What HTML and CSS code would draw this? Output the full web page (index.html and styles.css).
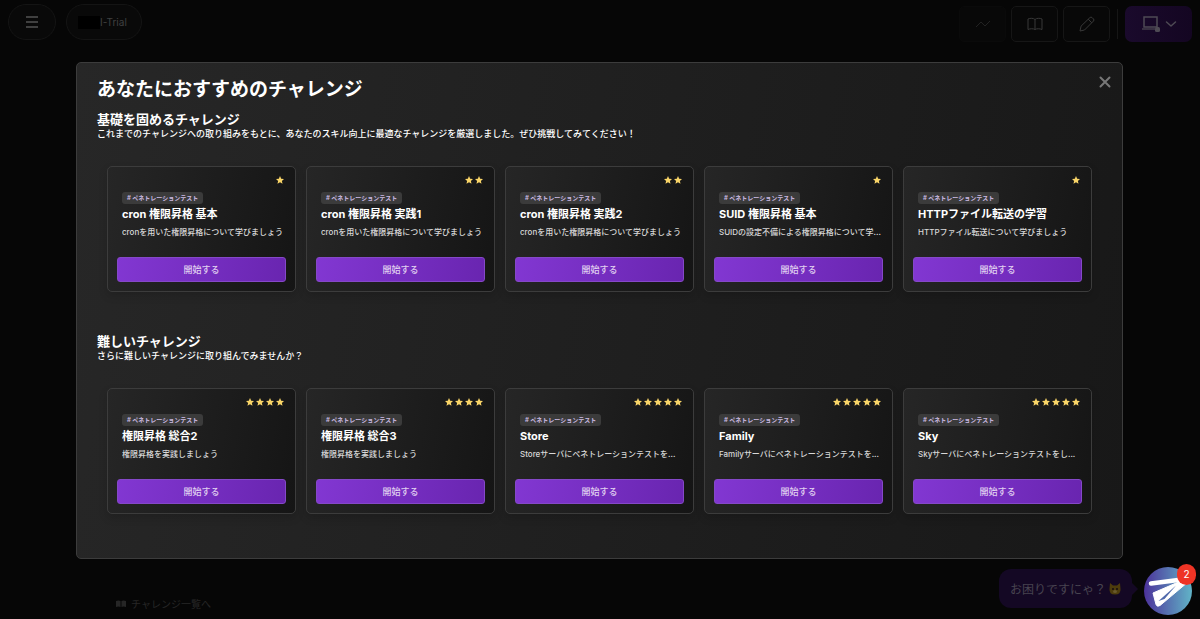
FILE: index.html
```html
<!DOCTYPE html>
<html lang="ja">
<head>
    <meta charset="UTF-8">
    <meta name="viewport" content="width=device-width, initial-scale=1.0">
    <title>おすすめのチャレンジ</title>
    <link rel="stylesheet" href="styles.css">
</head>
<body>
    <header class="header">
        <div class="header-left">
            <button class="pill menu" type="button" aria-label="メニュー">
                <svg width="12" height="12" viewBox="0 0 12 12" fill="currentColor"><path d="M0 0h12v2H0zM0 5h12v2H0zM0 10h12v2H0z"/></svg>
            </button>
            <a class="pill team" href="#"><span class="mask"></span>I-Trial</a>
        </div>
        <nav class="header-right">
            <button class="tool off" type="button" aria-label="進捗" disabled>
                <svg width="16" height="16" viewBox="0 0 16 16" fill="none" stroke="currentColor"><path d="M1 11l5-5 4 4 5-5"/></svg>
            </button>
            <button class="tool" type="button" aria-label="教材">
                <svg width="16" height="16" viewBox="0 0 16 16" fill="none" stroke="currentColor"><path d="M8 3.500C6.500 2 3 2 1 3v10.500c2-1 5.500-1 7 0 1.500-1 5-1 7 0V3c-2-1-5.500-1-7 .5zM8 3.500v10"/></svg>
            </button>
            <button class="tool" type="button" aria-label="メモ">
                <svg width="16" height="16" viewBox="0 0 16 16" fill="none" stroke="currentColor" stroke-linejoin="round" stroke-linecap="round"><path d="M11 1.500q1-1 2 0l1.500 1.500q1 1 0 2L5.500 14 1 15l1-4.500zM9.500 3.500l3 3"/></svg>
            </button>
            <span class="divider"></span>
            <button class="machine" type="button" aria-label="マシン">
                <svg width="20" height="18" viewBox="0 0 20 18"><path d="M3 2h13v10H3z" fill="none" stroke="currentColor" stroke-width="1.500"/><path d="M1 14h13" stroke="currentColor" stroke-width="2" opacity=".6"/><rect x="14" y="12" width="5" height="5" rx="1.500" fill="currentColor"/></svg>
                <svg width="12" height="12" viewBox="0 0 12 12" fill="none" stroke="currentColor" stroke-width="1.500" stroke-linecap="round" stroke-linejoin="round"><path d="M1.500 4l4.500 4 4.500-4"/></svg>
            </button>
        </nav>
    </header>

    <footer class="footer">
        <a href="#">
            <svg width="10" height="8" viewBox="0 0 10 8" fill="currentColor"><path d="M0 1q2.500-1 4.500 0v6q-2-1-4.500 0zM5.500 1q2-1 4.500 0v6q-2.500-1-4.500 0z"/></svg>
            チャレンジ一覧へ
        </a>
    </footer>

    <div class="overlay">
        <main class="modal" role="dialog" aria-labelledby="modal-title">
            <button class="close" type="button" aria-label="閉じる">
                <svg width="12" height="12" viewBox="0 0 12 12" stroke="currentColor" stroke-width="2" stroke-linecap="round"><path d="M1.500 1.500l9 9M10.500 1.500l-9 9"/></svg>
            </button>
            <h1 id="modal-title">あなたにおすすめのチャレンジ</h1>

            <section>
                <h2>基礎を固めるチャレンジ</h2>
                <p class="lead">これまでのチャレンジへの取り組みをもとに、あなたのスキル向上に最適なチャレンジを厳選しました。ぜひ挑戦してみてください！</p>
                <div class="cards" id="basic"></div>
            </section>

            <section>
                <h2>難しいチャレンジ</h2>
                <p class="lead">さらに難しいチャレンジに取り組んでみませんか？</p>
                <div class="cards" id="hard"></div>
            </section>
        </main>
    </div>

    <aside class="help">
        <div class="bubble">
            お困りですにゃ？
            <svg width="12" height="12" viewBox="0 0 12 12"><path d="M1 0l3 2.500h4L11 0l.5 6q.5 5.500-5.500 5.500T.5 6z" fill="#4d3c0c"/><circle cx="4" cy="6" r="1" fill="#150b10"/><circle cx="8" cy="6" r="1" fill="#150b10"/><ellipse cx="6" cy="8.500" rx="2" ry="1.500" fill="#68592c"/></svg>
        </div>
        <button class="chat" type="button" aria-label="サポートチャット">
            <svg width="48" height="48" viewBox="0 0 48 48">
                <path d="M7 16.500L42 12" stroke="#fff" stroke-width="4.500" stroke-linecap="round"/>
                <path d="M9 26L38 13.500 44 15 16 38.500q-3 2-4-1z" fill="#fff" stroke="#fff" stroke-linejoin="round"/>
                <path d="M14.500 34L32 18.500 20.500 32z" fill="#5069ab"/>
            </svg>
            <span class="badge">2</span>
        </button>
    </aside>

    <script src="script.js"></script>
</body>
</html>
```

FILE: styles.css
```css
* {
    box-sizing: border-box;
}

body {
    margin: 0;
    min-height: 100vh;
    display: flex;
    flex-direction: column;
    justify-content: space-between;
    background-color: #060606;
    color: #fff;
    font-family: Inter, "Noto Sans CJK JP", sans-serif;
}

button {
    font-family: inherit;
    padding: 0;
    cursor: pointer;
}

a {
    color: inherit;
    text-decoration: none;
}

svg {
    display: block;
    flex-shrink: 0;
}

h1, h2, h3, p {
    margin: 0;
}

/* Header */
.header {
    display: flex;
    justify-content: space-between;
    padding: 4px 8px;
}

.header-left {
    display: flex;
    align-items: flex-start;
    gap: 10px;
}

.pill {
    display: flex;
    align-items: center;
    justify-content: center;
    height: 36px;
    border: 1px solid #141414;
    border-radius: 18px;
    background-color: #090909;
    color: #404040;
    font-size: 10px;
}

.menu {
    width: 48px;
}

.team {
    padding: 0 14px 0 11px;
}

.mask {
    width: 22px;
    height: 13px;
    background-color: #000;
}

.header-right {
    display: flex;
    align-items: center;
    gap: 5px;
    padding-top: 2px;
}

.tool {
    display: flex;
    align-items: center;
    justify-content: center;
    width: 47px;
    height: 36px;
    border: 1px solid #161616;
    border-radius: 5px;
    background-color: #080808;
    color: #383838;
}

.off {
    border-color: #0a0a0a;
    color: #222;
}

.divider {
    width: 1px;
    height: 30px;
    margin: 0 2px;
    background-color: #161616;
}

.machine {
    display: flex;
    align-items: center;
    justify-content: center;
    gap: 4px;
    width: 67px;
    height: 36px;
    border: 0;
    border-radius: 7px;
    background: linear-gradient(90deg, #1a0a2c, #140622);
    color: #4e4a54;
}

/* Footer */
.footer {
    padding: 8px 116px;
    color: #262626;
    font-size: 10px;
    line-height: 14px;
}

.footer a {
    display: inline-flex;
    align-items: center;
    gap: 5px;
}

/* Modal */
.overlay {
    position: absolute;
    inset: 0;
    padding: 62px 77px 60px 76px;
}

.modal {
    position: relative;
    padding: 13px 20px 44px;
    border: 1px solid #3c3c3c;
    border-radius: 5px;
    background: linear-gradient(100deg, #272727, #181818);
}

.close {
    position: absolute;
    top: 13px;
    right: 11px;
    border: 0;
    background: none;
    color: #777;
}

h1 {
    margin-bottom: 7px;
    font-size: 19px;
    line-height: 28px;
}

h2 {
    font-size: 13px;
    line-height: 16px;
}

section + section {
    margin-top: 41px;
}

.lead {
    font-size: 9px;
    font-weight: 500;
    line-height: 14px;
}

/* Cards */
.cards {
    display: grid;
    grid-template-columns: repeat(5, minmax(0, 1fr));
    gap: 10px;
    padding: 25px 10px 0;
}

.card {
    padding: 8px 9px 9px;
    border: 1px solid #3c3c3c;
    border-radius: 5px;
    background: linear-gradient(100deg, #262626, #151515);
    box-shadow: 0 4px 8px rgba(0, 0, 0, 0.15);
}

.stars {
    display: flex;
    justify-content: flex-end;
    gap: 2px;
    height: 10px;
    padding: 1px 2px 1px 0;
}

.card-text {
    padding: 7px 1px 0 5px;
}

.tag {
    display: block;
    width: fit-content;
    height: 12px;
    padding: 0 5px;
    border-radius: 3px;
    background-color: #3b3b3b;
    color: #cdbbe4;
    font-size: 6px;
    font-weight: 600;
    line-height: 12px;
}

.card h3 {
    margin-top: 3px;
    font-size: 11px;
    line-height: 14px;
}

.card p {
    margin: 5px 0 19px;
    overflow: hidden;
    color: #d8d8d8;
    font-size: 8px;
    font-weight: 500;
    line-height: 12px;
    text-overflow: ellipsis;
    white-space: nowrap;
}

.start {
    display: block;
    width: 100%;
    height: 25px;
    border: 1px solid #8548c8;
    border-radius: 3px;
    background: linear-gradient(100deg, #8237d2, #6925b0);
    color: #e0d0f0;
    font-size: 9px;
    font-weight: 500;
}

/* Help chat */
.help {
    position: fixed;
    right: 8px;
    bottom: 4px;
    display: flex;
    align-items: center;
    gap: 12px;
}

.bubble {
    position: relative;
    display: flex;
    align-items: center;
    gap: 3px;
    height: 39px;
    margin-bottom: 5px;
    padding: 0 11px;
    border-radius: 12px;
    background-color: #140824;
    color: #484450;
    font-size: 12px;
}

.bubble::after {
    content: "";
    position: absolute;
    top: 14px;
    left: 100%;
    border: 6px solid transparent;
    border-right-width: 0;
    border-left-color: #140824;
}

.chat {
    position: relative;
    width: 48px;
    height: 48px;
    border: 0;
    border-radius: 50%;
    background: linear-gradient(90deg, #4c329b, #61b4c7);
}

.badge {
    position: absolute;
    top: -3px;
    right: -4px;
    width: 19px;
    height: 21px;
    border-radius: 10px;
    background-color: #ee3425;
    color: #fff;
    font-size: 10px;
    line-height: 21px;
    text-align: center;
}
```

FILE: script.js
```javascript
const basic = [
    { title: "cron 権限昇格 基本", text: "cronを用いた権限昇格について学びましょう", stars: 1 },
    { title: "cron 権限昇格 実践1", text: "cronを用いた権限昇格について学びましょう", stars: 2 },
    { title: "cron 権限昇格 実践2", text: "cronを用いた権限昇格について学びましょう", stars: 2 },
    { title: "SUID 権限昇格 基本", text: "SUIDの設定不備による権限昇格について学...", stars: 1 },
    { title: "HTTPファイル転送の学習", text: "HTTPファイル転送について学びましょう", stars: 1 }
];

const hard = [
    { title: "権限昇格 総合2", text: "権限昇格を実践しましょう", stars: 4 },
    { title: "権限昇格 総合3", text: "権限昇格を実践しましょう", stars: 4 },
    { title: "Store", text: "Storeサーバにペネトレーションテストを...", stars: 5 },
    { title: "Family", text: "Familyサーバにペネトレーションテストを...", stars: 5 },
    { title: "Sky", text: "Skyサーバにペネトレーションテストをし...", stars: 5 }
];

const star = '<svg width="8" height="8" viewBox="0 0 16 16" fill="#f9d568"><path d="M8 0l2.400 5.300 5.600.7-4.200 3.800L13 15.500l-5-2.900-5 2.900 1.200-5.700L0 6l5.600-.7z"/></svg>';

function renderCards(id, items) {
    document.getElementById(id).innerHTML = items.map(item => `
        <article class="card">
            <div class="stars">${star.repeat(item.stars)}</div>
            <div class="card-text">
                <span class="tag"># ペネトレーションテスト</span>
                <h3>${item.title}</h3>
                <p>${item.text}</p>
            </div>
            <button class="start" type="button">開始する</button>
        </article>
    `).join("");
}

renderCards("basic", basic);
renderCards("hard", hard);
```
